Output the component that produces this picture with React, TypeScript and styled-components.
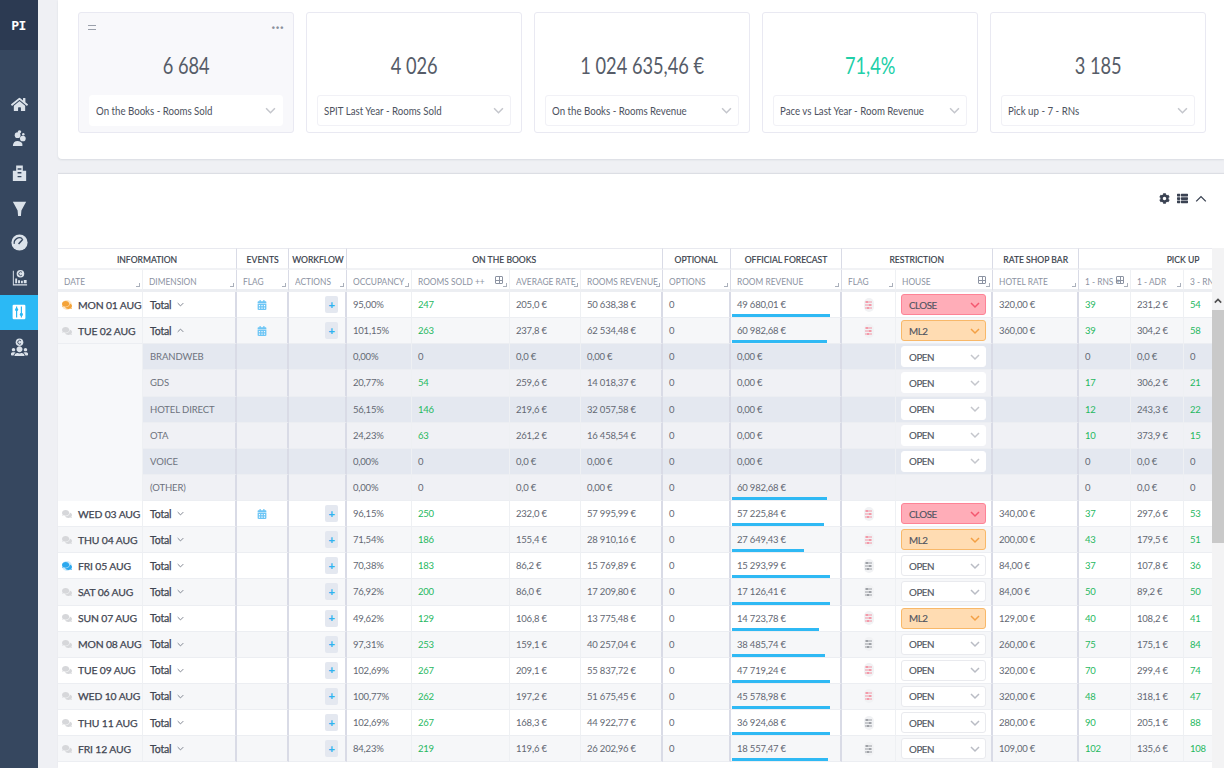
import React from 'react';
import styled, { createGlobalStyle } from 'styled-components';
import { FaCog, FaThList, FaHome, FaComments, FaCalendarAlt, FaUsers } from 'react-icons/fa';

const Global = createGlobalStyle`
  html, body { margin: 0; padding: 0; height: 768px; overflow: hidden; background: #eff0f4; }
  body { font-family: Lato, "Noto Sans", sans-serif; color: #4a505c; }
  * { box-sizing: border-box; }
`;

const COLS = '85px 94px 52px 58px 65px 98px 71px 82px 68px 111px 54px 97px 86px 52px 53px 53px 52px';

const Page = styled.div`display: flex; height: 768px; overflow: hidden;`;
const Sidebar = styled.aside`width: 38px; flex: none; background: #36475f; display: flex; flex-direction: column;`;
const Logo = styled.div`
  height: 50px; background: #2c3a52; color: #fff; display: flex; align-items: center; justify-content: center; padding-right: 1px;
  font: 700 13px "DejaVu Sans Mono", monospace; letter-spacing: -0.5px;
`;
const Nav = styled.nav`margin-top: 36.7px; display: flex; flex-direction: column;`;
const NavItem = styled.div<{ $active?: boolean }>`
  height: 34.7px; display: flex; align-items: center; justify-content: center;
  background: ${p => (p.$active ? '#2bb9f5' : 'transparent')}; color: #dbe2ea;
`;
const Main = styled.main`flex: 1; min-width: 0; padding-left: 20px; display: flex; flex-direction: column; gap: 15px;`;
const TopPanel = styled.section`
  height: 159px; flex: none; background: #fff; border-radius: 0 0 0 4px; box-shadow: 0 1px 2px rgba(60,70,90,.12);
  padding: 12px 18px 0 20px; display: flex; gap: 11.5px;
`;
const Kpi = styled.div<{ $tinted?: boolean }>`
  flex: 1 1 0; min-width: 0; height: 121px; border: 1px solid #e9e9f2; border-radius: 3px; position: relative;
  background: ${p => (p.$tinted ? '#f8f8fb' : '#fff')};
  display: flex; flex-direction: column; align-items: stretch; padding: 0 10px;
`;
const Handle = styled.span`
  position: absolute; left: 9px; top: 12px; width: 8px; height: 5px;
  border-top: 1px solid #9aa0ab; border-bottom: 1px solid #9aa0ab;
`;
const Dots = styled.span`
  position: absolute; right: 9px; top: 12px; color: #8a909c; font: 700 9px "Liberation Sans", sans-serif; letter-spacing: 1.1px; line-height: 6px;
`;
const KpiValue = styled.div<{ $good?: boolean }>`
  margin-top: 37px; height: 30px; line-height: 30px; text-align: center; font-size: 24px; font-weight: 400; white-space: nowrap;
  color: ${p => (p.$good ? '#20cfa8' : '#565c68')};
  transform: scaleX(0.76);
`;
const KpiSelect = styled.div<{ $flat?: boolean }>`
  margin-top: 15px; height: 31px; background: #fff; border: 1px solid ${p => (p.$flat ? '#fff' : '#f1f1f6')}; border-radius: 3px;
  display: flex; align-items: center; justify-content: space-between; padding: 0 6px 0 6px; min-width: 0;
  font-size: 11.8px; color: #4d525e;
`;
const KpiLabel = styled.span`flex: 1; min-width: 0; white-space: nowrap; transform: scaleX(0.82); transform-origin: left center;`;
const Chevron = styled.svg`flex: none; display: block;`;

const TablePanel = styled.section`flex: 1; min-height: 0; background: #fff; box-shadow: 0 -1px 1px rgba(60,70,90,.1); display: flex; flex-direction: column;`;
const Toolbar = styled.div`
  height: 74px; flex: none; display: flex; justify-content: flex-end; align-items: flex-start; gap: 7px; padding: 19px 17px 0 0; color: #3a4252;
`;
const TableArea = styled.div`flex: 1; min-height: 0; display: flex; overflow: hidden;`;
const TableClip = styled.div`width: 1154px; flex: none; overflow: hidden;`;
const Grid = styled.div`width: 1210px;`;
const Row = styled.div<{ $h?: number; $alt?: boolean }>`
  display: grid; grid-template-columns: ${COLS}; height: ${p => p.$h ?? 26.14}px;
  background: ${p => (p.$alt ? '#f6f7f9' : '#fff')};
`;
const GroupCell = styled.div<{ $span: number; $edge?: boolean }>`
  grid-column: span ${p => p.$span}; border-top: 1px solid #e8e9ef; border-bottom: 2px solid #f1f2f5;
  border-right: 1px solid ${p => (p.$edge ? '#d9dbe6' : '#eceef2')};
  display: flex; align-items: center; justify-content: center; white-space: nowrap;
  font-size: 10px; color: #363c48; -webkit-text-stroke: 0.2px #363c48;
`;
const GroupLabel = styled.span`display: inline-block; flex: none; transform: scaleX(0.86);`;
const HeadCell = styled.div<{ $edge?: boolean }>`
  position: relative; border-bottom: 3px solid #eceef2; border-right: 1px solid ${p => (p.$edge ? '#d9dbe6' : '#eef0f3')};
  display: flex; align-items: center; padding: 3px 0 0 6px; white-space: nowrap; overflow: hidden;
  font-size: 10.2px; color: #8c93a2;
`;
const HeadLabel = styled.span`display: inline-block; transform: scaleX(0.82); transform-origin: left center;`;
const Corner = styled.span`
  position: absolute; right: 2px; bottom: 2px; width: 4px; height: 4px;
  border-right: 1px solid #aab0bb; border-bottom: 1px solid #aab0bb;
`;
const Expand = styled.span`
  position: absolute; right: 6px; top: 6px; width: 8px; height: 8px; border: 1px solid #8c93a2; border-radius: 1px;
  background: linear-gradient(#8c93a2,#8c93a2) center/100% 1px no-repeat, linear-gradient(#8c93a2,#8c93a2) center/1px 100% no-repeat;
`;
const Cell = styled.div<{ $edge?: boolean; $bg?: string; $good?: boolean; $center?: boolean }>`
  position: relative; min-width: 0; display: flex; align-items: center; padding-left: ${p => (p.$center ? 0 : 6)}px; white-space: nowrap; overflow: hidden;
  justify-content: ${p => (p.$center ? 'center' : 'flex-start')};
  border-bottom: 1px solid #eceef2; border-right: ${p => (p.$edge ? '2px solid #d9dbe6' : '1px solid #eef0f3')};
  background: ${p => p.$bg ?? 'transparent'};
  font-size: 9.5px; letter-spacing: -0.2px; color: ${p => (p.$good ? '#1fb85f' : '#636873')};
`;
const BlankCell = styled.div`background: #f7f8fa; border-right: 1px solid #eef0f3;`;
const DateCell = styled(Cell)`padding-left: 4px; gap: 6px; font-size: 10.4px; color: #3f4551; letter-spacing: -0.15px; -webkit-text-stroke: 0.25px #3f4551;`;
const DimCell = styled(Cell)`padding-left: 7px; gap: 6px; font-size: 10.5px; letter-spacing: -0.2px; color: #3f4551; -webkit-text-stroke: 0.25px #3f4551;`;
const SubLabel = styled(Cell)`padding-left: 7px; font-size: 9.5px; letter-spacing: -0.1px; color: #6d727d;`;
const ActionCell = styled(Cell)`justify-content: flex-end; padding-right: 7px;`;
const Bubble = styled.span<{ $tone?: string }>`
  width: 10px; height: 10px; flex: none; display: flex; align-items: center; justify-content: center; border-radius: 50%;
  color: ${p => (p.$tone === 'orange' ? '#f4a338' : p.$tone === 'blue' ? '#2ba8ee' : '#d6d7da')};
  background: ${p => (p.$tone === 'orange' ? '#fde6c6' : p.$tone === 'blue' ? '#cfeafb' : 'transparent')};
`;
const PlusBtn = styled.span`
  width: 13px; height: 17px; background: #e4e8f0; border-radius: 2px; color: #2fb2f0; display: flex; align-items: center; justify-content: center;
  font: 700 11px "Liberation Sans", sans-serif;
`;
const FlagBadge = styled.span<{ $red?: boolean }>`
  width: 10px; height: 14px; border-radius: 5px; background: #f1f2f4; display: flex; align-items: center; justify-content: center;
  color: ${p => (p.$red ? '#f57f92' : '#85898f')};
`;
const tones: Record<string, string[]> = {
  CLOSE: ['#ffadb8', '#fd8396', '#f4566f'],
  ML2: ['#ffdcb2', '#f8b869', '#f3a044'],
  OPEN: ['#fff', '#e9eaee', '#b9bcc4'],
};
const Status = styled.div<{ $v: string; $flat?: boolean }>`
  width: 85px; height: 21px; border-radius: 3px; display: flex; align-items: center; justify-content: space-between; padding: 0 5px 0 7px;
  background: ${p => tones[p.$v][0]}; border: 1px solid ${p => (p.$flat ? '#fff' : tones[p.$v][1])};
  color: #4f5460; font-size: 9.8px; letter-spacing: -0.45px; -webkit-text-stroke: 0.15px #4f5460;
`;
const HouseCell = styled(Cell)`padding-right: 0;`;
const Bar = styled.span`position: absolute; left: 1px; bottom: 0; height: 3px; background: #2fb9f4;`;
const Scroll = styled.div`width: 12px; flex: none; background: #f3f3f4; display: flex; flex-direction: column; padding-top: 44px;`;
const ScrollArrow = styled.div`height: 18px; display: flex; align-items: center; justify-content: center; color: #505050;`;
const ScrollThumb = styled.div`height: 233px; background: #c9c9c9;`;

const Chev = ({ c = '#c4c6cc', s = 9, w = 1.4, up = false }: { c?: string; s?: number; w?: number; up?: boolean }) => (
  <Chevron width={s} height={s} viewBox="0 0 10 10" fill="none" stroke={c} strokeWidth={w}>
    <path d={up ? 'M1 7l4-4 4 4' : 'M1 3l4 4 4-4'} />
  </Chevron>
);

const I = ({ children, s = 19 }: { children: React.ReactNode; s?: number }) => (
  <svg width={s} height={s} viewBox="0 0 20 20" fill="currentColor">{children}</svg>
);
const navIcons = [
  <FaHome size={17} />,
  <I><circle cx="8" cy="6.500" r="3" /><path d="M3 18c0-3.500 2-5.500 5-5.500 2 0 4 1 5 3v2.500z" /><circle cx="13.500" cy="10" r="3" /><circle cx="10" cy="3" r="1.800" /><circle cx="14" cy="5.500" r="1.300" /></I>,
  <I><path d="M6.500 1.500h7V7h3.500v11H3V7h3.500z" /><path d="M8 4.500h4V6H8zM8 8.500h4V10H8zM8 12.500h4V14H8z" fill="#36475f" /></I>,
  <I><path d="M3 3h14l-5 9-.5 6h-3L8 12z" /></I>,
  <I><circle cx="10" cy="10" r="8.500" /><path d="M4.500 11.500a5.500 5.500 0 0 1 8.500-5.500" stroke="#36475f" strokeWidth="1.300" fill="none" /><path d="M9 11.500l4.500-5" stroke="#36475f" strokeWidth="1.600" /></I>,
  <I><path d="M3 3h1v14h14v1.500H3z" /><path d="M5.500 11h2v5h-2zM8.500 13h2v3h-2zM11.500 13.500h2V16h-2zM14.500 12.500h3V16h-3z" /><circle cx="11" cy="6" r="4" /><path d="M12.500 4.500a2 2 0 1 0 0 3" stroke="#36475f" strokeWidth="1" fill="none" /></I>,
  <I s={16}><rect x="2" y="1" width="16" height="18" rx="1.500" fill="#fff" /><path d="M7 3v14M13 3v14" stroke="#2bb9f5" strokeWidth="1.500" /><circle cx="7" cy="7" r="2" fill="#2bb9f5" /><circle cx="13" cy="13" r="2" fill="#2bb9f5" /></I>,
  <I><circle cx="10" cy="5.500" r="4" /><path d="M11.500 4a2 2 0 1 0 0 3" stroke="#36475f" strokeWidth="1" fill="none" /><FaUsers x="1" y="7" size={18} /></I>,
];

const Slider = () => (
  <svg width="7" height="8" viewBox="0 0 7 8" fill="none" stroke="currentColor" strokeWidth="0.8"><path d="M0 1h7M0 4h7M0 7h7" /><path d="M2 0v2M5 3v2M3 6v2" strokeWidth="1.200" /></svg>
);

type Day = { d: string; t?: string; cal?: boolean; occ: string; sold: string; avg: string; rev: string; fc: string; bar: number; red: boolean; st: string; rate: string; r1: string; a1: string; r3: string; open?: boolean };
const days: Day[] = [
  { d: 'MON 01 AUG', t: 'orange', cal: true, occ: '95,00%', sold: '247', avg: '205,0 €', rev: '50 638,38 €', fc: '49 680,01 €', bar: 98, red: true, st: 'CLOSE', rate: '320,00 €', r1: '39', a1: '231,2 €', r3: '54' },
  { d: 'TUE 02 AUG', cal: true, occ: '101,15%', sold: '263', avg: '237,8 €', rev: '62 534,48 €', fc: '60 982,68 €', bar: 95, red: true, st: 'ML2', rate: '360,00 €', r1: '39', a1: '304,2 €', r3: '58', open: true },
  { d: 'WED 03 AUG', cal: true, occ: '96,15%', sold: '250', avg: '232,0 €', rev: '57 995,99 €', fc: '57 225,84 €', bar: 92, red: true, st: 'CLOSE', rate: '340,00 €', r1: '37', a1: '297,6 €', r3: '53' },
  { d: 'THU 04 AUG', occ: '71,54%', sold: '186', avg: '155,4 €', rev: '28 910,16 €', fc: '27 649,43 €', bar: 72, red: true, st: 'ML2', rate: '200,00 €', r1: '43', a1: '179,5 €', r3: '51' },
  { d: 'FRI 05 AUG', t: 'blue', occ: '70,38%', sold: '183', avg: '86,2 €', rev: '15 769,89 €', fc: '15 293,99 €', bar: 98, red: false, st: 'OPEN', rate: '84,00 €', r1: '37', a1: '107,8 €', r3: '36' },
  { d: 'SAT 06 AUG', occ: '76,92%', sold: '200', avg: '86,0 €', rev: '17 209,80 €', fc: '17 126,41 €', bar: 98, red: false, st: 'OPEN', rate: '84,00 €', r1: '50', a1: '89,2 €', r3: '50' },
  { d: 'SUN 07 AUG', occ: '49,62%', sold: '129', avg: '106,8 €', rev: '13 775,48 €', fc: '14 723,78 €', bar: 87, red: true, st: 'ML2', rate: '129,00 €', r1: '40', a1: '108,2 €', r3: '41' },
  { d: 'MON 08 AUG', occ: '97,31%', sold: '253', avg: '159,1 €', rev: '40 257,04 €', fc: '38 485,74 €', bar: 93, red: false, st: 'OPEN', rate: '260,00 €', r1: '75', a1: '175,1 €', r3: '84' },
  { d: 'TUE 09 AUG', occ: '102,69%', sold: '267', avg: '209,1 €', rev: '55 837,72 €', fc: '47 719,24 €', bar: 98, red: true, st: 'OPEN', rate: '320,00 €', r1: '70', a1: '299,4 €', r3: '74' },
  { d: 'WED 10 AUG', occ: '100,77%', sold: '262', avg: '197,2 €', rev: '51 675,45 €', fc: '45 578,98 €', bar: 98, red: true, st: 'OPEN', rate: '320,00 €', r1: '48', a1: '318,1 €', r3: '47' },
  { d: 'THU 11 AUG', occ: '102,69%', sold: '267', avg: '168,3 €', rev: '44 922,77 €', fc: '36 924,68 €', bar: 98, red: false, st: 'OPEN', rate: '280,00 €', r1: '90', a1: '205,1 €', r3: '88' },
  { d: 'FRI 12 AUG', occ: '84,23%', sold: '219', avg: '119,6 €', rev: '26 202,96 €', fc: '18 557,47 €', bar: 96, red: false, st: 'OPEN', rate: '109,00 €', r1: '102', a1: '135,6 €', r3: '108' },
];
const subs = [
  { n: 'BRANDWEB', occ: '0,00%', sold: '0', avg: '0,0 €', rev: '0,00 €', fc: '0,00 €', r1: '0', a1: '0,0 €', r3: '0', select: true },
  { n: 'GDS', occ: '20,77%', sold: '54', avg: '259,6 €', rev: '14 018,37 €', fc: '0,00 €', r1: '17', a1: '306,2 €', r3: '21', select: true },
  { n: 'HOTEL DIRECT', occ: '56,15%', sold: '146', avg: '219,6 €', rev: '32 057,58 €', fc: '0,00 €', r1: '12', a1: '243,3 €', r3: '22', select: true },
  { n: 'OTA', occ: '24,23%', sold: '63', avg: '261,2 €', rev: '16 458,54 €', fc: '0,00 €', r1: '10', a1: '373,9 €', r3: '15', select: true },
  { n: 'VOICE', occ: '0,00%', sold: '0', avg: '0,0 €', rev: '0,00 €', fc: '0,00 €', r1: '0', a1: '0,0 €', r3: '0', select: true },
  { n: '(OTHER)', occ: '0,00%', sold: '0', avg: '0,0 €', rev: '0,00 €', fc: '60 982,68 €', r1: '0', a1: '0,0 €', r3: '0', select: false, bar: 95 },
];
const kpis = [
  { v: '6 684', l: 'On the Books - Rooms Sold', tinted: true },
  { v: '4 026', l: 'SPIT Last Year - Rooms Sold' },
  { v: '1 024 635,46 €', l: 'On the Books - Rooms Revenue' },
  { v: '71,4%', l: 'Pace vs Last Year - Room Revenue', good: true },
  { v: '3 185', l: 'Pick up - 7 - RNs' },
];
const groups: [string, number, boolean][] = [
  ['INFORMATION', 2, true], ['EVENTS', 1, true], ['WORKFLOW', 1, true], ['ON THE BOOKS', 4, true], ['OPTIONAL', 1, true],
  ['OFFICIAL FORECAST', 1, true], ['RESTRICTION', 2, true], ['RATE SHOP BAR', 1, true], ['PICK UP', 4, false],
];
const heads: [string, boolean, boolean][] = [
  ['DATE', false, false], ['DIMENSION', true, false], ['FLAG', true, false], ['ACTIONS', true, false], ['OCCUPANCY', false, false],
  ['ROOMS SOLD ++', false, true], ['AVERAGE RATE', false, false], ['ROOMS REVENUE', true, false], ['OPTIONS', true, false], ['ROOM REVENUE', true, false],
  ['FLAG', false, false], ['HOUSE', true, true], ['HOTEL RATE', true, false], ['1 - RNS +', false, true], ['1 - ADR', false, false], ['3 - RNS', false, false], ['3 - ADR', false, false],
];
const Num = ({ v }: { v: string }) => <Cell $good={v !== '0'}>{v}</Cell>;

export default function App() {
  return (
    <Page>
      <Global />
      <Sidebar>
        <Logo>PI</Logo>
        <Nav>
          {navIcons.map((ic, i) => <NavItem key={i} $active={i === 6}>{ic}</NavItem>)}
        </Nav>
      </Sidebar>
      <Main>
        <TopPanel>
          {kpis.map(k => (
            <Kpi key={k.l} $tinted={k.tinted}>
              {k.tinted && <Handle />}
              {k.tinted && <Dots>•••</Dots>}
              <KpiValue $good={k.good}>{k.v}</KpiValue>
              <KpiSelect $flat={k.tinted}><KpiLabel>{k.l}</KpiLabel><Chev s={11} /></KpiSelect>
            </Kpi>
          ))}
        </TopPanel>
        <TablePanel>
          <Toolbar>
            <FaCog size={11} />
            <FaThList size={11} />
            <Chev c="#3a4252" s={12} w={1.1} up />
          </Toolbar>
          <TableArea>
            <TableClip>
              <Grid>
                <Row $h={22}>
                  {groups.map(([g, s, e]) => <GroupCell key={g} $span={s} $edge={e}><GroupLabel>{g}</GroupLabel></GroupCell>)}
                </Row>
                <Row $h={22}>
                  {heads.map(([h, e, x], i) => (
                    <HeadCell key={i} $edge={e}><HeadLabel>{h}</HeadLabel>{x && <Expand />}<Corner /></HeadCell>
                  ))}
                </Row>
                {days.map((r, ri) => (
                  <React.Fragment key={r.d}>
                    <Row $alt={ri % 2 === 1}>
                      <DateCell><Bubble $tone={r.t}><FaComments size={10} /></Bubble>{r.d}</DateCell>
                      <DimCell $edge>Total<Chev c="#7d828d" s={7} up={r.open} /></DimCell>
                      <Cell $edge $center>{r.cal && <FaCalendarAlt size={10} color="#6cc5f5" />}</Cell>
                      <ActionCell $edge><PlusBtn>+</PlusBtn></ActionCell>
                      <Cell>{r.occ}</Cell>
                      <Num v={r.sold} />
                      <Cell>{r.avg}</Cell>
                      <Cell $edge>{r.rev}</Cell>
                      <Cell $edge>0</Cell>
                      <Cell $edge>{r.fc}<Bar style={{ width: r.bar }} /></Cell>
                      <Cell $center><FlagBadge $red={r.red}><Slider /></FlagBadge></Cell>
                      <HouseCell $edge $center><Status $v={r.st}>{r.st}<Chev c={tones[r.st][2]} s={10} w={1.5} /></Status></HouseCell>
                      <Cell $edge>{r.rate}</Cell>
                      <Num v={r.r1} />
                      <Cell>{r.a1}</Cell>
                      <Num v={r.r3} />
                      <Cell />
                    </Row>
                    {r.open && subs.map((s, si) => {
                      const bg = si % 2 === 0 ? '#e4e8f0' : '#f0f1f5';
                      return (
                        <Row key={s.n}>
                          <BlankCell />
                          <SubLabel $bg={bg} $edge>{s.n}</SubLabel>
                          <Cell $bg={bg} $edge />
                          <Cell $bg={bg} $edge />
                          <Cell $bg={bg}>{s.occ}</Cell>
                          <Cell $bg={bg} $good={s.sold !== '0'}>{s.sold}</Cell>
                          <Cell $bg={bg}>{s.avg}</Cell>
                          <Cell $bg={bg} $edge>{s.rev}</Cell>
                          <Cell $bg={bg} $edge>0</Cell>
                          <Cell $bg={bg} $edge>{s.fc}{s.bar && <Bar style={{ width: s.bar }} />}</Cell>
                          <Cell $bg={bg} />
                          <HouseCell $bg={bg} $edge $center>
                            {s.select && <Status $v="OPEN" $flat>OPEN<Chev s={10} w={1.5} /></Status>}
                          </HouseCell>
                          <Cell $bg={bg} $edge />
                          <Cell $bg={bg} $good={s.r1 !== '0'}>{s.r1}</Cell>
                          <Cell $bg={bg}>{s.a1}</Cell>
                          <Cell $bg={bg} $good={s.r3 !== '0'}>{s.r3}</Cell>
                          <Cell $bg={bg} />
                        </Row>
                      );
                    })}
                  </React.Fragment>
                ))}
              </Grid>
            </TableClip>
            <Scroll>
              <ScrollArrow><Chev c="#505050" s={8} w={2} up /></ScrollArrow>
              <ScrollThumb />
            </Scroll>
          </TableArea>
        </TablePanel>
      </Main>
    </Page>
  );
}
